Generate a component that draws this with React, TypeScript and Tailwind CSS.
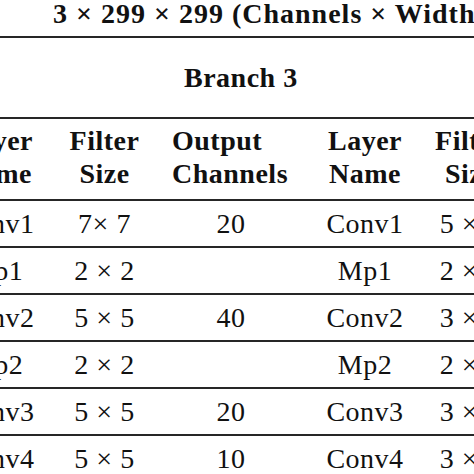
import React from "react";

type Row = [string, string, string, string, string, string];

const rows: Row[] = [
  ["Conv1", "7\u00d7 7", "20", "Conv1", "5 \u00d7 5", "20"],
  ["Mp1", "2 \u00d7 2", "", "Mp1", "2 \u00d7 2", ""],
  ["Conv2", "5 \u00d7 5", "40", "Conv2", "3 \u00d7 3", "40"],
  ["Mp2", "2 \u00d7 2", "", "Mp2", "2 \u00d7 2", ""],
  ["Conv3", "5 \u00d7 5", "20", "Conv3", "3 \u00d7 3", "20"],
  ["Conv4", "5 \u00d7 5", "10", "Conv4", "3 \u00d7 3", "10"],
];

// column widths, left edge of the table sits off-screen at -58px
const cols = ["w-[108px]", "w-[109px]", "w-[144px]", "w-[124px]", "w-[86px]", "w-[144px]"];

const rule = "border-b-2 border-[#262626]";

function HeaderCell({ top, bottom, cls, left }: { top: string; bottom: string; cls: string; left?: boolean }) {
  return (
    <div className={`${cls} shrink-0 flex flex-col ${left ? "items-start pl-[13px]" : "items-center"}`}>
      <span>{top}</span>
      <span>{bottom}</span>
    </div>
  );
}

export default function App() {
  return (
    <div
      className="w-[474px] h-[474px] overflow-hidden bg-white text-[#111] text-[28px] tracking-[0.5px]"
      style={{ fontFamily: '"Liberation Serif", "Times New Roman", serif' }}
    >
      <div className={`h-[38px] leading-[28px] font-bold whitespace-nowrap pl-[53px] tracking-[1px] ${rule}`}>
        3 × 299 × 299 (Channels × Width × Height)
      </div>

      <div className={`h-[81px] flex items-center pl-[184px] font-bold whitespace-nowrap ${rule}`}>
        Branch 3
      </div>

      <div className={`h-[82px] ${rule}`}>
        <div className="-ml-[58px] flex pt-[5px] leading-[33px] font-bold whitespace-nowrap">
          <HeaderCell cls={cols[0]} top="Layer" bottom="Name" />
          <HeaderCell cls={cols[1]} top="Filter" bottom="Size" />
          <HeaderCell cls={cols[2]} top="Output" bottom="Channels" left />
          <HeaderCell cls={cols[3]} top="Layer" bottom="Name" />
          <HeaderCell cls={cols[4]} top="Filter" bottom="Size" />
          <HeaderCell cls={cols[5]} top="Output" bottom="Channels" left />
        </div>
      </div>

      {rows.map((r, i) => (
        <div key={i} className={`h-[47px] ${rule}`}>
          <div className="-ml-[58px] flex h-full items-center whitespace-nowrap">
            {r.map((c, j) => (
              <div key={j} className={`${cols[j]} shrink-0 text-center`}>
                {c}
              </div>
            ))}
          </div>
        </div>
      ))}
    </div>
  );
}
